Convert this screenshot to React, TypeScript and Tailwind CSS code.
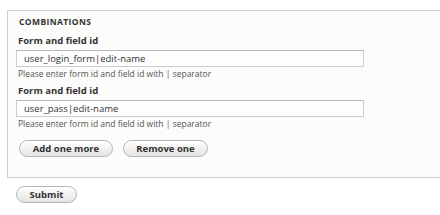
import React from "react";

const FONT = { fontFamily: '"Open Sans", "Liberation Sans", sans-serif' };

function Field({ value, className = "" }: { value: string; className?: string }) {
  return (
    <div className={className}>
      <label className="block pl-[2px] text-[9.5px] font-bold leading-[12px] text-[#333]">Form and field id</label>
      <input
        readOnly
        value={value}
        className="mt-[3px] block h-[17px] w-[348px] border border-[#cccccc] border-t-[#b8b8b8] bg-[#fefefe] px-[7px] text-[9.5px] leading-[15px] text-[#333] outline-none"
      />
      <p className="mt-[1px] pl-[2px] text-[8.5px] leading-[11px] text-[#555]">
        Please enter form id and field id with | separator
      </p>
    </div>
  );
}

function Pill({ children, width }: { children: React.ReactNode; width: string }) {
  return (
    <button
      type="button"
      className={`h-[17px] ${width} rounded-full border border-[#b4b4b4] bg-gradient-to-b from-white to-[#e4e4e4] text-center text-[9.5px] font-bold leading-[15px] text-[#333]`}
    >
      {children}
    </button>
  );
}

export default function App() {
  return (
    <div className="h-[215px] w-[440px] overflow-hidden bg-white" style={FONT}>
      <div className="pt-[10px] pl-[7px]">
        <div className="w-[460px] border border-[#cccccc] bg-[#fcfcfa] pt-[5px] pl-[8px] pb-[20px]">
          <div className="pl-[3px] text-[8.5px] font-bold uppercase leading-[12px] tracking-[0.4px] text-[#333]">
            Combinations
          </div>
          <Field className="mt-[7px]" value="user_login_form|edit-name" />
          <Field className="mt-[6px]" value="user_pass|edit-name" />
          <div className="mt-[11px] flex gap-[10px] pl-[3px]">
            <Pill width="w-[94px]">Add one more</Pill>
            <Pill width="w-[85px]">Remove one</Pill>
          </div>
        </div>
        <div className="mt-[8px] flex pl-[9px]">
          <Pill width="w-[61px]">Submit</Pill>
        </div>
      </div>
    </div>
  );
}
